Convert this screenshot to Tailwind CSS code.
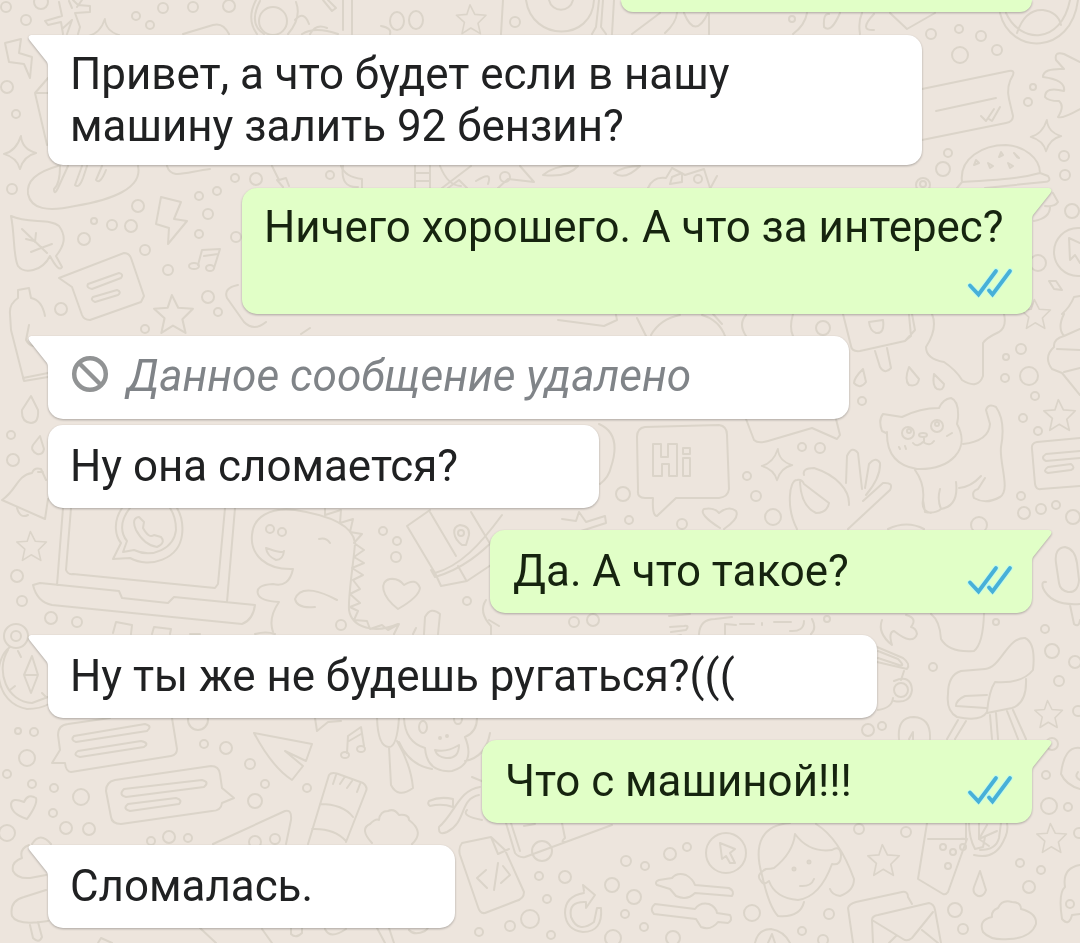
<!DOCTYPE html>
<html lang="ru">
<head>
    <meta charset="UTF-8">
    <meta name="viewport" content="width=device-width, initial-scale=1.0">
    <title>Чат</title>
    <script src="https://cdn.jsdelivr.net/npm/@tailwindcss/browser@4"></script>
</head>
<body class="bg-[#ede5dd]">
    <!-- Shared shapes -->
    <svg class="hidden">
        <symbol id="tail" viewBox="0 0 21 31"><path d="M21 0H3Q-1 1 1.500 5L19 27Q20 29 20 31H21Z" fill="currentColor"/></symbol>
        <symbol id="ticks" viewBox="0 0 46 30">
            <path d="M3 18L11.500 26.500L29 3M22 22L25.500 26.500L43 3" fill="none" stroke="#c5fbe8" stroke-width="6" stroke-linecap="round" stroke-linejoin="round"/>
            <path d="M3 17.500L11.500 26.500L29 3M22 22.500L25.500 26.500L43 3" fill="none" stroke="#47b0d8" stroke-width="3.800" stroke-linecap="round"/>
        </symbol>
        <symbol id="star" viewBox="-20 -20 40 40" overflow="visible"><path d="M-2 -18L4 -6L18 -5L8 5L11 18L-1 11L-12 18L-9 4L-19 -5L-6 -6Z"/></symbol>
        <symbol id="spark" viewBox="-20 -20 40 40" overflow="visible"><path d="M1 -18Q2 -4 17 0Q4 3 0 17Q-3 5 -17 1Q-4 -2 1 -18Z"/></symbol>
    </svg>

    <div class="relative w-[1080px] h-[943px] overflow-hidden bg-[#ede5dd]">
        <!-- Doodle wallpaper -->
        <svg class="absolute inset-0" width="1080" height="943" viewBox="0 0 1080 943" fill="none" stroke="#dbd4c9" stroke-width="2" stroke-linecap="round" stroke-linejoin="round">
            <!-- bubbles and dots -->
            <g>
                <circle cx="6" cy="7" r="5"/><circle cx="26" cy="20" r="5"/><circle cx="41" cy="2" r="7"/><circle cx="163" cy="8" r="5"/><circle cx="193" cy="7" r="5"/><circle cx="229" cy="6" r="6"/><circle cx="136" cy="16" r="4"/><circle cx="150" cy="25" r="4"/>
                <circle cx="7" cy="87" r="6"/><circle cx="16" cy="114" r="4"/><circle cx="12" cy="189" r="5"/><circle cx="138" cy="206" r="6"/><circle cx="94" cy="221" r="3"/><circle cx="112" cy="225" r="5"/><circle cx="131" cy="226" r="6"/><circle cx="84" cy="239" r="6"/><circle cx="145" cy="250" r="5"/><circle cx="168" cy="270" r="5"/><circle cx="199" cy="196" r="4"/><circle cx="217" cy="191" r="4"/><circle cx="208" cy="214" r="5"/><circle cx="199" cy="234" r="4"/><circle cx="235" cy="178" r="4"/><circle cx="256" cy="179" r="6"/><circle cx="236" cy="237" r="5"/><circle cx="61" cy="309" r="6"/><circle cx="208" cy="297" r="6"/><circle cx="218" cy="312" r="4"/><circle cx="145" cy="329" r="4"/>
                <circle cx="11" cy="435" r="4"/><circle cx="13" cy="460" r="6"/><circle cx="17" cy="576" r="6"/><circle cx="22" cy="601" r="5"/><circle cx="51" cy="618" r="6"/><circle cx="77" cy="622" r="5"/><circle cx="341" cy="625" r="5"/><circle cx="383" cy="531" r="4"/><circle cx="397" cy="541" r="4"/><circle cx="396" cy="557" r="5"/><circle cx="467" cy="601" r="4"/>
                <circle cx="18" cy="731" r="3"/><circle cx="34" cy="732" r="4"/><circle cx="27" cy="758" r="8"/><circle cx="7" cy="774" r="4"/><circle cx="32" cy="784" r="4"/><circle cx="54" cy="788" r="4"/><circle cx="81" cy="797" r="8"/><circle cx="53" cy="813" r="4"/><circle cx="66" cy="828" r="6"/><circle cx="89" cy="829" r="6"/><circle cx="7" cy="833" r="8"/><circle cx="151" cy="841" r="4"/><circle cx="169" cy="837" r="6"/><circle cx="188" cy="838" r="4"/><circle cx="255" cy="842" r="6"/><circle cx="275" cy="839" r="5"/><circle cx="255" cy="801" r="7"/><circle cx="265" cy="784" r="4"/><circle cx="307" cy="788" r="4"/><circle cx="250" cy="764" r="5"/><circle cx="226" cy="748" r="6"/><circle cx="204" cy="744" r="4"/><circle cx="198" cy="720" r="10"/>
                <circle cx="931" cy="34" r="5"/><circle cx="959" cy="29" r="4"/><circle cx="981" cy="36" r="5"/><circle cx="960" cy="55" r="8"/><circle cx="997" cy="50" r="5"/><circle cx="1033" cy="87" r="3"/><circle cx="1028" cy="102" r="4"/><circle cx="948" cy="153" r="4"/><circle cx="943" cy="169" r="7"/><circle cx="923" cy="185" r="7"/><circle cx="923" cy="184" r="3"/><circle cx="1064" cy="156" r="5"/><circle cx="1065" cy="175" r="5"/><circle cx="1072" cy="211" r="7"/><circle cx="1038" cy="263" r="8"/><circle cx="330" cy="175" r="4"/><circle cx="505" cy="177" r="5"/><circle cx="515" cy="22" r="5"/><circle cx="792" cy="19" r="3"/>
                <circle cx="823" cy="328" r="7"/><circle cx="1006" cy="357" r="3"/><circle cx="1021" cy="349" r="5"/><circle cx="1005" cy="378" r="4"/><circle cx="1029" cy="376" r="9"/><circle cx="1035" cy="396" r="4"/><circle cx="1023" cy="418" r="4"/><circle cx="1038" cy="431" r="4"/><circle cx="862" cy="401" r="4"/><circle cx="802" cy="447" r="4"/><circle cx="820" cy="448" r="5"/><circle cx="747" cy="476" r="4"/><circle cx="756" cy="496" r="5"/><circle cx="773" cy="517" r="8"/><circle cx="623" cy="494" r="7"/><circle cx="629" cy="520" r="4"/><circle cx="682" cy="524" r="5"/><circle cx="1021" cy="496" r="4"/><circle cx="1024" cy="513" r="6"/><circle cx="1041" cy="509" r="5"/><circle cx="1056" cy="505" r="4"/><circle cx="1073" cy="517" r="7"/><circle cx="979" cy="525" r="8"/>
                <circle cx="574" cy="622" r="5"/><circle cx="593" cy="620" r="6"/><circle cx="827" cy="619" r="3"/><circle cx="996" cy="622" r="3"/><circle cx="1045" cy="629" r="4"/><circle cx="1052" cy="651" r="7"/><circle cx="1075" cy="662" r="6"/><circle cx="1059" cy="681" r="5"/><circle cx="933" cy="667" r="4"/><circle cx="868" cy="730" r="6"/><circle cx="882" cy="726" r="4"/><circle cx="1078" cy="711" r="5"/><circle cx="1052" cy="744" r="6"/><circle cx="1046" cy="775" r="4"/>
                <circle cx="542" cy="851" r="10"/><circle cx="539" cy="876" r="4"/><circle cx="565" cy="877" r="6"/><circle cx="547" cy="899" r="4"/><circle cx="612" cy="885" r="7"/><circle cx="634" cy="897" r="7"/><circle cx="626" cy="861" r="5"/><circle cx="645" cy="866" r="4"/><circle cx="670" cy="854" r="6"/><circle cx="687" cy="847" r="4"/><circle cx="625" cy="914" r="4"/><circle cx="644" cy="927" r="4"/><circle cx="530" cy="919" r="9"/><circle cx="510" cy="926" r="5"/><circle cx="551" cy="935" r="4"/><circle cx="479" cy="932" r="4"/><circle cx="613" cy="938" r="8"/><circle cx="673" cy="938" r="7"/><circle cx="752" cy="913" r="8"/><circle cx="829" cy="914" r="5"/><circle cx="802" cy="931" r="4"/><circle cx="823" cy="940" r="5"/><circle cx="859" cy="829" r="5"/><circle cx="906" cy="832" r="5"/><circle cx="1049" cy="806" r="8"/><circle cx="1068" cy="807" r="4"/><circle cx="1020" cy="863" r="4"/><circle cx="1041" cy="870" r="4"/><circle cx="1029" cy="887" r="6"/><circle cx="955" cy="910" r="7"/><circle cx="963" cy="929" r="5"/><circle cx="1079" cy="833" r="5"/>
            </g>
            <!-- stars and sparkles -->
            <g>
                <use href="#star" x="452" y="-1" width="40" height="40" transform="translate(94 4) scale(.8)"/>
                <use href="#star" x="153" y="293" width="42" height="42"/>
                <use href="#star" x="16" y="530" width="32" height="32"/>
                <use href="#star" x="1020" y="298" width="32" height="32"/>
                <use href="#star" x="1043" y="398" width="34" height="34"/>
                <use href="#star" x="1034" y="699" width="30" height="30"/>
                <use href="#star" x="867" y="843" width="34" height="34"/>
                <use href="#star" x="1036" y="822" width="32" height="32"/>
                <use href="#spark" x="1" y="134" width="38" height="38"/>
                <use href="#spark" x="86" y="17" width="36" height="36"/>
                <use href="#spark" x="1028" y="118" width="36" height="36"/>
                <use href="#spark" x="759" y="446" width="36" height="38"/>
            </g>
            <!-- snowflake, bolts, bread, leaf -->
            <path d="M45 21L62 16L59 2M73 0L78 5L90 6V12L75 13L80 27L78 34M45 21L48 25L61 22L63 34M67 34L72 20L62 29M72 8L69 1M77 7L82 0"/>
            <path d="M5 43L21 39L19 53L32 57L30 78L24 64L9 62Z"/>
            <path d="M161 197L181 202L174 219L187 221L168 244L169 228L156 224Z"/>
            <path d="M48 78L35 93L47 145M35 93H48"/>
            <path d="M58 166C40 171 26 180 28 194C31 209 47 212 75 206C112 200 143 188 138 166M60 166Q60 184 54 189Q54 196 58 188L68 166M82 166L75 185Q79 189 83 178L87 166M102 166L96 180Q100 185 106 170"/>
            <path d="M11 216C28 224 50 218 59 226C67 237 64 246 56 256L62 267Q59 273 50 256C42 272 24 274 18 266C13 256 15 236 11 216ZM22 229L47 253M35 242L36 233M41 248L52 244M34 241L26 239M41 248L31 252"/>
            <!-- note bubble and music notes -->
            <path d="M59 278L124 253Q129 253 131 258L144 296L141 302L90 320Q84 320 82 315L72 287ZM88 284L119 273Q124 274 121 278L92 289Q86 288 88 284ZM93 297L117 290Q122 292 118 295L95 302Q90 300 93 297Z"/>
            <path d="M198 265L202 250L220 249L214 268M204 256L218 254"/><ellipse cx="194" cy="266" rx="5" ry="3"/><ellipse cx="210" cy="268" rx="4" ry="3"/>
            <path d="M347 753L348 736L361 727L364 746M349 741L361 734"/><ellipse cx="345" cy="755" rx="4" ry="3"/><ellipse cx="361" cy="749" rx="4" ry="3"/>
            <path d="M167 166C171 180 186 172 210 169M272 166L279 180L286 178L289 186M277 180L283 187M341 166Q345 177 362 179L362 188"/>
            <!-- bottle, candle, drops, bell -->
            <path d="M18 298V290L29 288L31 298M18 298Q9 304 10 314L11 330L24 381L48 377M31 298Q42 300 45 316M24 381L23 378L48 373M29 325L26 340Q30 348 37 345M238 285Q223 288 227 298L244 322Q254 332 266 322"/>
            <path d="M31 396L38 410Q39 423 31 423Q21 422 22 410ZM40 436L44 449Q43 455 37 454Q30 450 33 445ZM301 334L310 328"/>
            <path d="M2 500C17 490 17 475 32 473Q34 467 41 469L46 480M2 500L45 519L48 499M17 508Q20 519 28 515M38 472L43 472"/>
            <!-- laptop -->
            <path d="M63 508L57 585M71 508L66 570Q68 575 73 574L215 588L218 584L225 508M235 508L227 602M33 585L40 583L119 591L122 598L168 603L174 597L255 605Q253 620 242 624L52 605Q37 602 33 585Z"/>
            <path d="M122 508C112 523 116 537 121 543L113 559L130 558C150 569 179 559 182 535Q184 520 177 508M130 508C118 523 122 535 127 541L123 552L134 550C153 559 174 548 176 530Q176 517 170 508M139 517Q131 518 136 530Q144 545 157 547Q166 543 161 537L154 535Q149 539 143 528L144 522Z"/>
            <!-- dinosaur -->
            <path d="M293 569C266 570 250 555 252 535C253 517 270 507 295 510C328 515 353 525 355 543C354 560 348 595 349 610C352 628 375 634 398 624M293 569Q289 588 273 584Q255 585 258 594Q260 601 279 602Q268 618 273 632M325 509V515L341 510L340 523L353 519L350 532L362 534L354 543L364 550L354 557L364 563L352 568L363 575L353 580L360 589L350 594L360 603L350 607L358 611L354 620L367 621L370 629L382 625L388 630L399 624L394 634M266 548Q283 554 284 551Q283 560 276 560Q267 556 266 548ZM319 539Q326 537 330 543M315 607Q297 609 295 599C301 583 324 593 337 600"/>
            <circle cx="270" cy="529" r="4"/><circle cx="282" cy="532" r="4"/>
            <!-- map, heart, cactus -->
            <path d="M430 510L407 526L435 573L441 586L467 581L491 565M435 573C460 566 480 545 502 515M431 570L435 577C463 569 482 552 497 537M430 512L456 556M471 512L489 542M458 566L466 580M462 545C453 538 451 527 460 525Q470 526 469 535L466 545Z"/><circle cx="461" cy="533" r="3"/>
            <path d="M398 609C381 596 379 581 390 579Q399 578 404 585Q416 577 420 588Q419 597 398 609ZM424 634L425 617Q431 606 440 614L438 634M413 634L416 628M486 600Q478 612 491 626V634M499 626L489 620"/>
            <!-- compass -->
            <circle cx="16" cy="636" r="12"/><circle cx="16" cy="636" r="5"/><path d="M10 647C-8 660 -6 703 27 709Q40 709 49 704M8 650C-5 671 7 702 32 703L48 697M32 656L24 675L31 693L38 675ZM24 675H38M10 690L15 686M18 651L21 657M42 693L46 697"/>
            <path d="M113 633L116 622L132 625L131 634M152 634L154 627L171 629L170 634M190 634L200 634M255 634Q266 631 275 634"/>
            <!-- chat bubbles -->
            <path d="M172 718L177 749Q177 755 171 756L71 772Q66 772 65 763L52 763L60 750L58 735Q58 725 68 724L110 718M74 736L145 724Q153 726 147 731L76 742Q70 740 74 736ZM78 751L141 741Q150 743 144 747L80 757Q72 755 78 751Z"/>
            <path d="M115 780L211 766Q219 766 220 774L222 788L234 798L222 803Q221 811 212 811L121 824Q112 824 111 817L106 791Q106 782 115 780ZM124 789L202 780Q210 782 204 787L126 797Q118 795 124 789ZM128 804L176 798Q183 800 179 804L130 811Q122 809 128 804Z"/>
            <path d="M11 804Q12 797 24 802Q28 793 36 798Q38 804 27 819Q11 814 11 804Z"/>
            <!-- paper plane, sock, pizza -->
            <path d="M254 733L312 744L306 761L285 751L303 766L292 780Q272 767 254 733ZM315 718L317 731L328 722L341 721M308 844L329 775Q332 771 341 775L363 783Q368 787 366 791L346 842M320 804Q343 804 353 817M312 829Q334 828 346 841M336 775L333 784M344 778L340 784M352 781L347 788M360 784L357 792M213 844L285 811Q292 809 291 820L286 844"/>
            <!-- monkey -->
            <path d="M377 718Q378 747 389 747Q397 747 399 718M389 747L391 785Q398 799 413 788Q411 765 397 741M399 742Q409 765 432 769M404 718Q405 742 425 748Q427 773 452 771Q476 764 465 737Q477 732 477 718M490 733Q486 757 465 761M435 750Q446 753 459 745Q459 759 446 758Q437 757 435 750ZM429 801Q440 796 453 799V807Q442 803 430 806Q427 804 429 801ZM472 777L484 782M480 787C459 790 455 813 439 827Q438 836 447 832C467 822 459 799 479 795M467 810Q461 816 482 820"/>
            <ellipse cx="423" cy="727" rx="4" ry="6"/><ellipse cx="458" cy="719" rx="4" ry="5"/><circle cx="440" cy="738" r="1"/><circle cx="447" cy="736" r="1"/>
            <path d="M372 843Q359 829 370 824Q376 818 379 820Q380 811 388 811Q394 808 399 815Q409 814 409 820Q425 832 412 844M32 844Q40 831 51 844M29 845Q19 849 22 858Q11 862 13 871Q17 879 30 878L46 875M12 916Q9 901 24 897L46 890M12 916Q17 926 48 921M30 925L33 938Q39 944 42 937L38 922M98 943L101 938L112 943"/>
            <!-- top edge -->
            <path d="M256 0Q246 19 257 34M260 1Q248 24 264 34M288 34Q302 18 296 2M302 34Q315 26 338 34M295 20Q304 10 309 24M323 0L332 11L336 8L328 0M343 0V30M352 0V34M183 34L213 25Q223 22 229 34M310 34Q316 23 327 28"/><circle cx="273" cy="21" r="14"/>
            <ellipse cx="397" cy="21" rx="7" ry="9"/><ellipse cx="416" cy="20" rx="7" ry="9"/><path d="M381 26Q392 28 390 34M503 0L501 34M526 0C532 42 592 42 594 0M549 0C552 13 570 13 573 0M599 0L596 27L592 34M603 0L601 27L606 34M614 0L612 34M660 13L632 34M677 13Q676 23 665 33M684 13Q695 40 708 13M709 14V34M807 13Q805 25 793 34M829 14Q823 13 824 27Q831 34 840 13M862 13Q858 22 860 34M874 14Q858 31 874 30M890 13L907 29L935 13"/>
            <path d="M1000 13C1010 55 1071 56 1078 0M1006 13C1020 44 1061 45 1070 0M1017 33Q1025 9 1043 10Q1058 12 1061 25"/>
            <!-- ticket, splat, burger -->
            <path d="M922 89L1009 71Q1015 70 1013 75Q1006 86 1009 99L1013 116Q1013 122 1006 123L922 140M936 111L996 98M981 116L986 121L994 109M989 119L992 121L1000 107"/>
            <path d="M1080 62L1064 54Q1054 51 1056 60L1064 69Q1043 68 1043 77Q1066 80 1064 91Q1045 86 1045 97Q1048 101 1059 101Q1065 106 1058 117Q1062 119 1080 109"/>
            <path d="M962 182C959 158 983 145 1006 145C1024 146 1040 158 1040 173C1015 180 990 180 962 182ZM962 182L957 188M1040 173L1048 176Q1052 182 1044 182L985 188M979 163L976 160L974 165ZM1001 152L999 157L1003 155ZM1014 153L1017 157L1019 158ZM988 163L990 168L993 166ZM1008 163L1010 168L1013 166ZM1053 193L1058 202Q1055 207 1045 206M1050 207Q1050 218 1034 221"/>
            <path d="M343 166Q340 188 358 187M415 166V188M430 166V188M415 173H430M415 181H430M442 188L471 166M448 188L459 180L467 188M476 181Q493 170 488 184M498 188L508 179L534 182L520 166M543 175Q556 164 578 166Q568 178 543 175ZM614 173Q624 166 640 166Q625 181 614 173ZM648 188Q653 176 666 178L672 168L685 175L704 169L710 188M672 177L682 173V182L670 184ZM440 166Q448 186 461 186M711 187L717 176"/><circle cx="698" cy="179" r="4"/>
            <circle cx="1078" cy="252" r="24"/><path d="M1080 243L1069 238L1070 260L1075 255L1080 263M1049 281L1056 281L1062 290L1054 289ZM1080 296L1074 297Q1070 307 1062 314"/>
            <!-- row under the second message -->
            <path d="M558 320L604 326L617 320L616 315M637 318L646 336M651 335Q660 319 680 315M746 315Q738 324 746 336M702 315Q719 320 725 336M713 314L722 324M793 314Q789 328 793 336M843 314L851 346Q852 352 860 351L905 341L915 330L912 314M905 341L911 336L909 315M869 322L883 320Q885 334 876 333Q870 331 869 322M875 351L880 367Q885 375 891 368L887 348M932 314Q938 328 926 347Q926 359 944 362Q956 370 962 380Q978 390 983 376V343Q986 338 999 332Q1007 327 1004 314M1064 314Q1057 328 1064 336Q1053 339 1054 347Q1043 357 1052 369L1062 373L1080 395M1080 368L1064 372M1057 349L1080 350M1064 336L1080 329"/>
            <path d="M863 369Q854 378 854 383Q860 390 866 382ZM909 367L919 379Q918 387 909 385Q904 380 909 367ZM934 374L944 384Q944 391 937 389Q932 386 934 374Z"/>
            <!-- speech bubbles -->
            <path d="M746 419L754 440Q758 444 768 441L812 428L837 439L840 435L836 419M599 424Q622 434 611 467Q609 477 600 484"/>
            <path d="M645 427L719 425Q727 426 727 435L729 489Q728 497 719 498H676L657 516Q652 516 653 498L645 498Q637 498 638 490L637 437Q637 428 645 427Z"/>
            <path d="M653 444H661V457H668V444H677V476H669V464H662V476H653ZM683 458H690V476H683ZM683 448H690V454H683Z"/>
            <path d="M562 519L576 521L579 512L586 522L605 516L606 523L581 531M720 528Q698 514 704 509Q714 507 719 513Q729 505 736 511Q740 518 724 529"/>
            <!-- ok hand -->
            <path d="M797 529C786 508 789 480 797 480Q802 479 804 484Q817 494 829 503Q827 513 816 513Q801 506 800 482M804 475Q802 468 814 468C836 475 850 490 849 505M846 483L847 456Q852 445 858 453L862 489M865 488L869 464Q876 456 880 463Q881 477 866 495M863 501L883 483Q894 482 890 490L848 529M888 529Q907 520 924 529"/>
            <!-- cat -->
            <path d="M902 417L883 414Q878 420 882 431L886 433M902 417Q920 408 939 408Q943 399 951 398Q959 401 958 418L957 424C971 449 951 470 917 469Q886 464 887 432M963 444Q989 441 990 424L986 410Q988 403 996 407C1003 417 1004 431 1001 447C999 462 1011 491 1000 497Q986 505 974 498Q971 491 978 489L985 478M915 470Q925 484 923 500L925 512Q935 514 941 509Q959 506 956 482M940 489Q937 500 941 509M959 488Q971 487 981 476M923 500Q921 511 931 513M913 443Q917 448 923 442Q930 447 934 441M924 437V442M899 447L900 449M905 446L906 449M947 436L952 433"/><circle cx="908" cy="433" r="6"/><circle cx="937" cy="426" r="6"/><circle cx="909" cy="431" r="2"/><circle cx="937" cy="424" r="2"/><ellipse cx="923" cy="435" rx="4" ry="2"/>
            <path d="M1080 438L1037 442Q1031 443 1032 449L1035 484Q1036 490 1041 489L1080 486M1080 451L1046 454Q1040 458 1046 461L1080 458M1048 467L1071 464Q1076 468 1071 470L1048 473Q1042 471 1048 467Z"/>
            <!-- microphone, cup, chair -->
            <path d="M1056 563Q1054 548 1065 547Q1075 549 1077 563L1079 580Q1078 593 1068 592Q1060 590 1059 583ZM1046 582Q1041 581 1043 588Q1051 606 1080 604M1070 605L1074 624Q1079 628 1080 620"/>
            <path d="M669 616L690 614M670 627L684 626Q690 625 686 630L671 632M672 637L681 635M699 634Q700 619 715 619L732 617M736 625L725 624V634M740 624H754M762 623V625M774 622H791M790 631Q804 632 804 621M812 619Q817 629 811 634"/>
            <path d="M882 620Q877 633 892 645Q888 632 894 631Q913 646 917 634Q916 628 911 627Q918 618 906 615M931 614Q940 621 941 639Q949 653 974 651Q983 644 984 614M877 647L903 658Q911 664 907 669L877 662M878 651L898 659Q906 667 899 665L878 658M904 671L901 680M893 698Q892 708 878 710"/><circle cx="901" cy="690" r="7"/><path d="M894 681Q911 674 912 690Q910 704 894 701"/>
            <path d="M961 671L985 669C1001 668 1007 637 1025 638Q1036 643 1033 670Q1022 684 995 682Q989 691 987 712Q981 722 957 717Q946 711 948 694Q948 675 961 671ZM987 713L1012 708Q1027 703 1026 679M987 695L965 696Q956 700 956 706L986 708M958 720L947 739M966 721L955 739M990 715L992 739M996 713L998 739M1007 711L1018 739M1013 710L1026 739M899 739Q897 717 914 717Q931 718 930 739M909 739L913 732V739M1080 748Q1064 746 1061 774Q1066 785 1080 789M1078 772Q1074 777 1080 780"/>
            <!-- bottom row -->
            <path d="M462 843L491 837L505 850L524 892Q524 899 516 901L485 913Q480 914 478 907L460 855Q458 848 462 843ZM491 837L498 854L509 849M486 870L477 878L487 888M498 863L494 890M503 866L510 875L501 883M506 823L515 853Q519 858 525 857L612 825M511 823L520 851M562 823L565 838Q560 842 565 842M524 826L535 824"/>
            <path d="M584 891L583 885L595 895L586 908V902Q568 901 571 917Q578 934 594 922L597 908L601 908Q603 932 583 932Q566 930 565 913Q565 896 584 893"/>
            <path d="M659 880L672 878Q677 872 686 875Q693 879 695 885L729 888Q735 891 732 896L695 893Q687 901 676 896L670 889L657 885Q654 882 659 880ZM655 904L695 909Q700 902 709 904Q716 907 717 913L730 915Q733 920 728 923L718 922Q711 931 701 927L696 919L654 914Q649 909 655 904Z"/>
            <circle cx="726" cy="853" r="20"/><path d="M720 843L735 849L730 853L735 863L730 863L726 856L722 859Z"/>
            <path d="M790 823C762 825 753 844 762 875Q769 907 778 916Q800 918 804 902M795 834Q793 853 774 868Q771 869 766 869Q755 875 761 881Q763 886 769 881Q775 898 798 900Q820 897 832 864Q841 866 841 855Q840 845 832 850Q809 853 795 834M816 824Q839 838 854 879Q854 891 840 896Q832 895 830 889M800 886Q811 887 814 879M755 943Q758 929 771 929Q784 931 790 943M768 943L772 934L775 943"/><circle cx="794" cy="869" r="1.500"/><circle cx="809" cy="862" r="1.500"/>
            <path d="M927 823L918 879L943 894Q946 895 948 892L967 839H928M966 823V839M979 823V839L989 846M979 839L997 831M979 839L987 825M969 823Q969 838 975 849L983 847L985 837M974 855Q994 860 1003 842Q1009 831 1007 823M980 850Q996 850 999 838L1001 823M960 839Q967 838 966 841"/><circle cx="943" cy="847" r="3"/><circle cx="953" cy="852" r="3"/><circle cx="963" cy="847" r="3"/><circle cx="948" cy="866" r="3"/>
            <path d="M980 871L986 890Q984 897 978 896Q972 893 974 887ZM853 943L848 908Q849 904 856 902L902 892Q908 891 908 897L912 904M873 943L872 920Q872 916 878 915L929 903Q934 904 935 910L941 943M872 920L903 939Q907 942 912 938L933 912M896 936L889 943M922 930L938 943"/>
            <path d="M998 908Q1002 899 1012 902Q1021 902 1021 909Q1037 913 1036 924Q1031 938 1009 939Q991 941 983 932Q978 920 992 917Q991 911 998 908ZM1080 865Q1062 868 1065 887Q1058 893 1062 919Q1069 927 1072 915L1080 914"/><circle cx="1070" cy="904" r="4"/>
            <path d="M377 928L385 943M389 928L394 943M409 930Q414 936 425 931Q430 927 429 921V914M430 909H433V920H430M200 928L216 943M262 929L272 943M325 929Q330 940 346 929M291 928V934Q296 939 302 933V928"/>
        </svg>

        <!-- Messages -->
        <main class="relative flex flex-col items-start px-12 font-[Roboto,sans-serif] text-[43.9px] leading-[52px] text-[#202122]">
            <div class="self-end w-[411px] h-3 rounded-b-[15px] bg-[#e1ffc7] drop-shadow-[0_1.5px_1px_rgba(0,0,0,0.28)]"></div>

            <div class="relative mt-[23px] w-[874px] h-[130px] pl-[22px] pt-[13px] rounded-[15px] rounded-tl-none bg-white drop-shadow-[0_1.5px_1px_rgba(0,0,0,0.28)]">
                <svg class="absolute top-0 -left-5 w-[21px] h-[31px] text-white"><use href="#tail"/></svg>
                <p class="whitespace-nowrap">Привет, а что будет если в нашу<br>машину залить 92 бензин?</p>
            </div>

            <div class="relative self-end mt-[23px] w-[790px] h-[126px] pl-[22px] pt-[13px] rounded-[15px] rounded-tr-none bg-[#e1ffc7] text-[#16240f] drop-shadow-[0_1.5px_1px_rgba(0,0,0,0.28)]">
                <svg class="absolute top-0 -right-5 w-[21px] h-[31px] -scale-x-100 text-[#e1ffc7]"><use href="#tail"/></svg>
                <p class="whitespace-nowrap">Ничего хорошего. А что за интерес?</p>
                <svg class="absolute right-[19px] bottom-4 w-[46px] h-[30px]"><use href="#ticks"/></svg>
            </div>

            <div class="relative flex items-start mt-[22px] w-[801px] h-[83px] pl-[23px] pt-[14px] rounded-[15px] rounded-tl-none bg-white text-[#808488] drop-shadow-[0_1.5px_1px_rgba(0,0,0,0.28)]">
                <svg class="absolute top-0 -left-5 w-[21px] h-[31px] text-white"><use href="#tail"/></svg>
                <svg class="mt-[5px] w-[38px] h-[38px]" viewBox="0 0 38 38" fill="none" stroke="#919394" stroke-width="4.500"><circle cx="19" cy="19" r="15.800"/><path d="M8 8L30 30"/></svg>
                <p class="ml-[18px] text-[44.2px] leading-[52px] italic whitespace-nowrap">Данное сообщение удалено</p>
            </div>

            <div class="mt-[6px] w-[551px] h-[83px] pl-[22px] pt-[15px] rounded-[15px] bg-white drop-shadow-[0_1.5px_1px_rgba(0,0,0,0.28)]">
                <p class="whitespace-nowrap">Ну она сломается?</p>
            </div>

            <div class="relative self-end mt-[22px] w-[542px] h-[83px] pl-[23px] pt-[15px] rounded-[15px] rounded-tr-none bg-[#e1ffc7] text-[#16240f] drop-shadow-[0_1.5px_1px_rgba(0,0,0,0.28)]">
                <svg class="absolute top-0 -right-5 w-[21px] h-[31px] -scale-x-100 text-[#e1ffc7]"><use href="#tail"/></svg>
                <p class="whitespace-nowrap">Да. А что такое?</p>
                <svg class="absolute right-[19px] bottom-[18px] w-[46px] h-[30px]"><use href="#ticks"/></svg>
            </div>

            <div class="relative mt-[22px] w-[829px] h-[83px] pl-[22px] pt-[15px] rounded-[15px] rounded-tl-none bg-white drop-shadow-[0_1.5px_1px_rgba(0,0,0,0.28)]">
                <svg class="absolute top-0 -left-5 w-[21px] h-[31px] text-white"><use href="#tail"/></svg>
                <p class="whitespace-nowrap">Ну ты же не будешь ругаться?(((</p>
            </div>

            <div class="relative self-end mt-[22px] w-[550px] h-[83px] pl-[23px] pt-[15px] rounded-[15px] rounded-tr-none bg-[#e1ffc7] text-[#16240f] drop-shadow-[0_1.5px_1px_rgba(0,0,0,0.28)]">
                <svg class="absolute top-0 -right-5 w-[21px] h-[31px] -scale-x-100 text-[#e1ffc7]"><use href="#tail"/></svg>
                <p class="whitespace-nowrap">Что с машиной!!!</p>
                <svg class="absolute right-[19px] bottom-[18px] w-[46px] h-[30px]"><use href="#ticks"/></svg>
            </div>

            <div class="relative mt-[22px] w-[407px] h-[83px] pl-[22px] pt-[15px] rounded-[15px] rounded-tl-none bg-white drop-shadow-[0_1.5px_1px_rgba(0,0,0,0.28)]">
                <svg class="absolute top-0 -left-5 w-[21px] h-[31px] text-white"><use href="#tail"/></svg>
                <p class="whitespace-nowrap">Сломалась.</p>
            </div>
        </main>
    </div>
</body>
</html>
